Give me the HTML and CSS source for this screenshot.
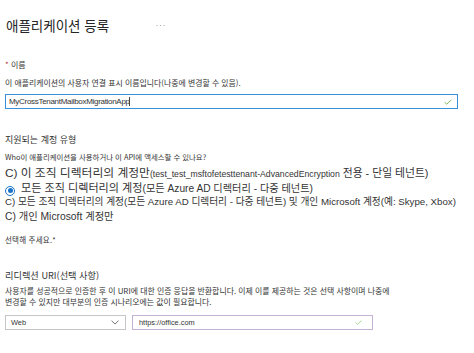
FILE: index.html
```html
<!DOCTYPE html>
<html lang="ko">
<head>
<meta charset="utf-8">
<link rel="stylesheet" href="styles.css">
</head>
<body>
<div class="page">
  <div class="title-row">
    <h1 class="title">애플리케이션 등록</h1>
    <svg class="more" width="9" height="3" viewBox="0 0 9 3"><circle cx="1" cy="1.5" r="0.6" fill="#a0a0a0"/><circle cx="4.5" cy="1.5" r="0.6" fill="#a0a0a0"/><circle cx="8" cy="1.5" r="0.6" fill="#a0a0a0"/></svg>
  </div>

  <div class="label-name"><span class="req">*</span> 이름</div>
  <div class="desc">이 애플리케이션의 사용자 연결 표시 이름입니다(나중에 변경할 수 있음).</div>
  <div class="input name-input">
    <span class="val">MyCrossTenantMailboxMigrationApp</span><span class="caret"></span>
    <svg class="check" width="8" height="6" viewBox="0 0 8 6"><path d="M0.6 3.2 L2.8 5.2 L7.4 0.8" fill="none" stroke="#7fbf5e" stroke-width="1"/></svg>
  </div>

  <div class="section">지원되는 계정 유형</div>
  <div class="who">Who이 애플리케이션을 사용하거나 이 API에 액세스할 수 있나요?</div>
  <div class="opt o1"><span class="a">C) 이 조직 디렉터리의 계정만</span><span class="b">(test_test_msftofetesttenant-AdvancedEncryption</span><span class="c"> 전용 - 단일 테넌트)</span></div>
  <div class="opt o2"><span class="radio"><span class="dot"></span></span><span class="a">모든 조직 디렉터리의 계정</span><span class="b">(모든 Azure AD 디렉터리 - 다중 테넌트)</span></div>
  <div class="opt o3">C) 모든 조직 디렉터리의 계정(모든 Azure AD 디렉터리 - 다중 테넌트) 및 개인 Microsoft 계정(예: Skype, Xbox)</div>
  <div class="opt o4">C) 개인 Microsoft 계정만</div>

  <div class="choose">선택해 주세요.*</div>

  <div class="section redirect">리디렉션 URI(선택 사항)</div>
  <div class="desc2">사용자를 성공적으로 인증한 후 이 URI에 대한 인증 응답을 반환합니다. 이제 이를 제공하는 것은 선택 사항이며 나중에<br>변경할 수 있지만 대부분의 인증 시나리오에는 값이 필요합니다.</div>
  <div class="uri-row">
    <div class="input select">
      <span class="val">Web</span>
      <svg class="chev" width="8" height="5" viewBox="0 0 8 5"><path d="M0.5 0.6 L4 4.1 L7.5 0.6" fill="none" stroke="#666" stroke-width="0.9"/></svg>
    </div>
    <div class="input url">
      <span class="val">https://office.com</span>
      <svg class="check" width="7" height="5" viewBox="0 0 7 5"><path d="M0.5 2.6 L2.4 4.3 L6.5 0.6" fill="none" stroke="#a6d08f" stroke-width="0.9"/></svg>
    </div>
  </div>
</div>
</body>
</html>
```

FILE: styles.css
```css
* { box-sizing: border-box; }
html, body { margin: 0; padding: 0; background: #fff; }
body {
  font-family: "Noto Sans CJK KR", "Liberation Sans", sans-serif;
  color: #333333;
}
.page {
  width: 474px;
  height: 353px;
  padding: 15px 0 0 5px;
  overflow: hidden;
}
.title-row {
  display: flex;
  align-items: center;
  height: 20px;
}
.title {
  margin: 0 0 0 1px;
  font-size: 13.5px;
  font-weight: 400;
  line-height: 20px;
  color: #252525;
}
.more {
  margin-left: 47px;
}
.label-name {
  margin-top: 24px;
  font-size: 8px;
  line-height: 12px;
  color: #333;
}
.req { color: #b4373c; }
.desc {
  margin-top: 6px;
  font-size: 7.9px;
  line-height: 11px;
}
.input {
  display: flex;
  align-items: center;
  height: 15px;
  border: 1px solid #c8c6c4;
  padding: 0 4px;
  font-family: "Liberation Sans", sans-serif;
  font-size: 7.4px;
  color: #333;
  background: #fff;
}
.name-input {
  margin-top: 6px;
  width: 453px;
  border: 1.5px solid #3a8fd8;
  font-size: 8px;
  letter-spacing: -0.3px;
  padding-left: 3px;
}
.caret {
  width: 1px;
  height: 9px;
  background: #444;
  margin-left: -1px;
}
.name-input .check { margin-left: auto; margin-right: 1px; }
.section {
  margin-top: 25px;
  font-size: 9px;
  line-height: 12px;
  color: #333;
}
.who {
  margin-top: 6px;
  font-size: 7.4px;
  line-height: 10px;
}
.opt {
  display: block;
  height: 15px;
  line-height: 15px;
  font-family: "Liberation Sans", "Noto Sans CJK KR", sans-serif;
  color: #333;
  white-space: nowrap;
}
.o1 { margin-top: 2px; }
.o1 .a { font-size: 11.8px; }
.o1 .b { font-size: 8.7px; }
.o1 .c { font-size: 10.8px; }
.o2 .a { font-size: 11.1px; }
.o2 .b { font-size: 10.2px; }
.o3 { font-size: 9.7px; }
.o4 { font-size: 10.3px; }
.radio {
  display: inline-flex;
  align-items: center;
  justify-content: center;
  width: 10px;
  height: 10px;
  border: 1px solid #1a73c8;
  border-radius: 50%;
  margin: 0 6px 0 0;
  vertical-align: -1px;
}
.dot {
  width: 5px;
  height: 5px;
  border-radius: 50%;
  background: #1a73c8;
}
.choose {
  margin-top: 11px;
  font-size: 7.5px;
  line-height: 10px;
  letter-spacing: 0.2px;
}
.redirect {
  margin-top: 24px;
  font-size: 9.2px;
}
.desc2 {
  margin-top: 4px;
  font-size: 7.9px;
  line-height: 11px;
}
.uri-row {
  display: flex;
  gap: 6px;
  margin-top: 8px;
}
.select { width: 121px; padding-left: 5px; }
.chev { margin-left: auto; margin-right: 2px; }
.url { width: 241px; border-color: #c4b2d6; padding-left: 6px; }
.url .check { margin-left: auto; margin-right: 6px; }
```
